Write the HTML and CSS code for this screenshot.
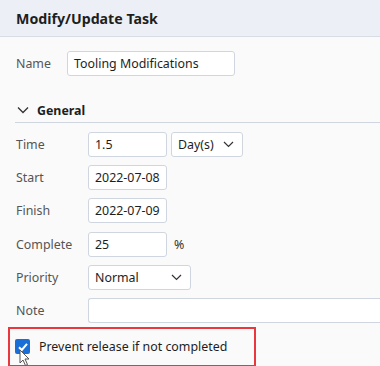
FILE: index.html
```html
<!DOCTYPE html>
<html>
<head>
<meta charset="utf-8">
<link rel="stylesheet" href="styles.css">
</head>
<body>
<div class="header"><h1 class="title">Modify/Update Task</h1></div>
<div class="content">
  <div class="row name-row">
    <label class="label name-label">Name</label>
    <div class="input name-input">Tooling Modifications</div>
  </div>
  <div class="section">
    <svg class="chev" width="12" height="8" viewBox="0 0 12 8"><path d="M1 1.5 L6 6.5 L11 1.5" fill="none" stroke="#333" stroke-width="1.3"/></svg>
    <span class="section-title">General</span>
  </div>
  <div class="form">
    <div class="row">
      <label class="label">Time</label>
      <div class="input short">1.5</div>
      <div class="input select days">Day(s)<svg class="sel-chev" width="11" height="7" viewBox="0 0 11 7"><path d="M1 1 L5.5 5.5 L10 1" fill="none" stroke="#333" stroke-width="1.2"/></svg></div>
    </div>
    <div class="row">
      <label class="label">Start</label>
      <div class="input short">2022-07-08</div>
    </div>
    <div class="row">
      <label class="label">Finish</label>
      <div class="input short">2022-07-09</div>
    </div>
    <div class="row">
      <label class="label">Complete</label>
      <div class="input short">25</div>
      <span class="unit">%</span>
    </div>
    <div class="row">
      <label class="label">Priority</label>
      <div class="input select prio">Normal<svg class="sel-chev" width="11" height="7" viewBox="0 0 11 7"><path d="M1 1 L5.5 5.5 L10 1" fill="none" stroke="#333" stroke-width="1.2"/></svg></div>
    </div>
    <div class="row">
      <label class="label">Note</label>
      <div class="input note"></div>
    </div>
  </div>
  <div class="check-box">
    <span class="checkbox"><svg width="14" height="14" viewBox="0 0 14 14"><path d="M3 7.2 L5.8 10 L11 3.8" fill="none" stroke="#fff" stroke-width="2"/></svg></span>
    <span class="check-label">Prevent release if not completed</span>
    <svg class="cursor" width="12" height="18" viewBox="0 0 12 18"><path d="M1 1 L1 14 L4 11 L6.5 16.5 L8.5 15.5 L6 10 L10 10 Z" fill="#fff" stroke="#555" stroke-width="1"/></svg>
  </div>
</div>
</body>
</html>
```
FILE: styles.css
```css
* { box-sizing: border-box; }
body {
  margin: 0;
  background: #fafafa;
  font-family: "Noto Sans", "Open Sans", sans-serif;
  font-size: 12.4px;
  color: #222;
  width: 380px;
  height: 366px;
  overflow: hidden;
  white-space: nowrap;
}
.header {
  height: 37px;
  background: #eceff6;
  border-bottom: 1px solid #d8dde5;
  display: flex;
  align-items: center;
  padding-left: 16px;
}
.title {
  margin: 0;
  font-size: 14.2px;
  font-weight: 700;
  color: #1e1e1e;
}
.content {
  padding-left: 16px;
}
.row {
  display: flex;
  align-items: center;
  height: 25px;
}
.name-row {
  margin-top: 14px;
}
.label {
  color: #555;
  width: 72px;
  flex: none;
}
.name-label { width: 51px; }
.input {
  flex: none;
  height: 25px;
  border: 1px solid #cfd6df;
  border-radius: 3px;
  background: #fff;
  display: flex;
  align-items: center;
  padding-left: 6px;
  color: #1e1e1e;
}
.name-input { width: 168px; }
.short { width: 79px; }
.select {
  margin-left: 4px;
  justify-content: space-between;
  padding-right: 8px;
}
.days { width: 72px; }
.prio { width: 103px; margin-left: 0; }
.sel-chev { flex: none; }
.unit { margin-left: 7px; color: #333; }
.note {
  width: 292px;
  border-right: none;
  border-radius: 3px 0 0 3px;
}
.section {
  margin-top: 24px;
  display: flex;
  align-items: center;
  border-bottom: 1px solid #cfd6e0;
  margin-left: -1px;
  padding-bottom: 2px;
  height: 23px;
}
.chev { margin-left: 2px; margin-right: 8px; }
.section-title {
  font-weight: 700;
  color: #1e1e1e;
}
.form {
  margin-top: 9px;
  display: flex;
  flex-direction: column;
  gap: 8.2px;
}
.check-box {
  margin-top: 4px;
  margin-left: -8px;
  width: 248px;
  height: 40px;
  border: 2px solid #e8383d;
  display: flex;
  align-items: center;
  padding-left: 5px;
  position: relative;
}
.checkbox {
  width: 15px;
  height: 15px;
  background: #1a6fd6;
  border-radius: 2px;
  display: flex;
  align-items: center;
  justify-content: center;
  margin-right: 9px;
}
.check-label { color: #1e1e1e; }
.cursor {
  position: absolute;
  left: 9px;
  top: 20px;
}
```
